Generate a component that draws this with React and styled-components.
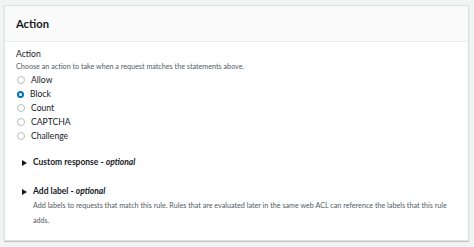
import React, { useState } from 'react';
import styled, { createGlobalStyle } from 'styled-components';

const GlobalStyle = createGlobalStyle`
    html, body {
        margin: 0;
        padding: 0;
        background: #f2f3f3;
        font-family: Lato, "Open Sans", "Liberation Sans", sans-serif;
        color: #16191f;
    }
`;

const Page = styled.div`
    width: 474px;
    height: 247px;
    padding: 5px 5px 6px 4px;
    box-sizing: border-box;
`;

const Card = styled.div`
    display: flex;
    flex-direction: column;
    height: 100%;
    box-sizing: border-box;
    background: white;
    border: 1px solid #dfe0e0;
    box-shadow: 0 1px 1px rgba(0,0,0,.18);
`;

const CardHeader = styled.div`
    display: flex;
    align-items: center;
    height: 35px;
    padding: 0 11px;
    background: #fafafa;
    border-bottom: 1px solid #eaeded;
`;

const Title = styled.h2`
    margin: 0;
    font-size: 11.2px;
    font-weight: 700;
    color: #16191f;
`;

const CardBody = styled.div`
    display: flex;
    flex-direction: column;
    padding: 6px 11px 0;
`;

const Label = styled.div`
    font-size: 8.6px;
    line-height: 12px;
    color: #16191f;
`;

const Hint = styled.div`
    font-size: 7.2px;
    line-height: ${p => p.lh || 13}px;
    color: #545b64;
    padding-left: ${p => p.indent || 0}px;
    padding-right: 4px;
`;

const RadioList = styled.div`
    display: flex;
    flex-direction: column;
`;

const RadioRow = styled.label`
    display: flex;
    align-items: center;
    height: 14.1px;
    gap: 6px;
    padding-left: 1px;
    font-size: 8.6px;
    color: #16191f;
    cursor: pointer;
`;

const Dot = styled.span`
    width: ${p => p.checked ? 3 : 6}px;
    height: ${p => p.checked ? 3 : 6}px;
    border-radius: 50%;
    border: ${p => p.checked ? '2.5px solid #0073bb' : '1px solid #b6bec0'};
    background: white;
    flex-shrink: 0;
`;

const Expander = styled.div`
    display: flex;
    flex-direction: column;
    margin-top: ${p => p.top}px;
    padding-left: 6px;
`;

const ExpanderHead = styled.div`
    display: flex;
    align-items: center;
    gap: 6px;
    font-size: 8.5px;
    font-weight: 700;
    line-height: 13px;
    color: #16191f;
    em {
        font-weight: 700;
    }
`;

const Caret = styled.span`
    width: 0;
    height: 0;
    border-top: 3.5px solid transparent;
    border-bottom: 3.5px solid transparent;
    border-left: 5px solid #16191f;
`;

const options = ['Allow', 'Block', 'Count', 'CAPTCHA', 'Challenge'];

export default function App() {
    const [choice, setChoice] = useState('Block');

    return (
        <Page>
            <GlobalStyle />
            <Card>
                <CardHeader>
                    <Title>Action</Title>
                </CardHeader>
                <CardBody>
                    <Label>Action</Label>
                    <Hint>Choose an action to take when a request matches the statements above.</Hint>
                    <RadioList>
                        {options.map(o => (
                            <RadioRow key={o} onClick={() => setChoice(o)}>
                                <Dot checked={choice === o} />
                                {o}
                            </RadioRow>
                        ))}
                    </RadioList>

                    {/* EXPANDABLE SECTIONS */}
                    <Expander top={13}>
                        <ExpanderHead>
                            <Caret />
                            <span>Custom response - <em>optional</em></span>
                        </ExpanderHead>
                    </Expander>
                    <Expander top={16}>
                        <ExpanderHead>
                            <Caret />
                            <span>Add label - <em>optional</em></span>
                        </ExpanderHead>
                        <Hint indent={11} lh={15}>
                            Add labels to requests that match this rule. Rules that are evaluated later in the same web ACL can reference the labels that this rule adds.
                        </Hint>
                    </Expander>
                </CardBody>
            </Card>
        </Page>
    );
}
